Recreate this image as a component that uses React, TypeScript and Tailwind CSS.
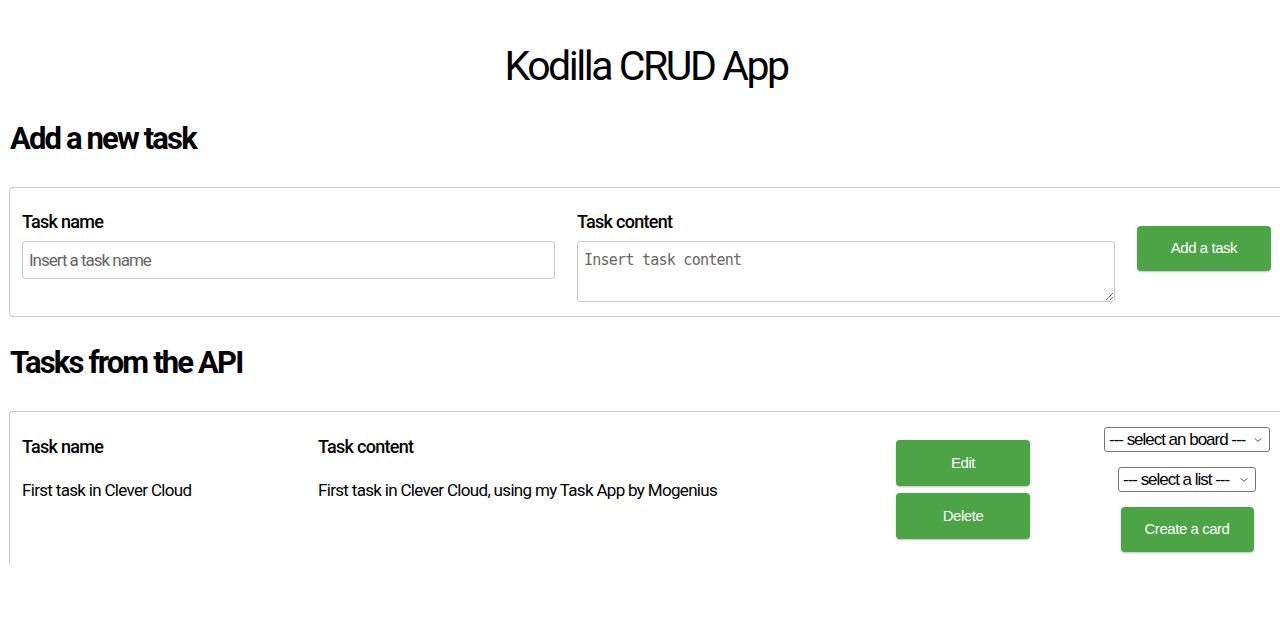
import { ChevronDown } from "lucide-react";

const btn =
  "rounded-[4px] bg-[#4ca446] text-white text-[15px] tracking-[-0.03em] [font-family:'Liberation_Sans',Arial,sans-serif] shadow-[0_1px_2px_rgba(0,0,0,0.25)]";

const SelectBox = ({ label, className }: { label: string; className: string }) => (
  <div
    className={`flex items-center justify-between whitespace-nowrap rounded-[3px] border border-[#767676] bg-white pl-[4px] pr-[5px] text-[17px] leading-none tracking-[-0.06em] text-black [font-family:'Liberation_Sans',Arial,sans-serif] ${className}`}
  >
    <span>{label}</span>
    <ChevronDown className="h-[12px] w-[12px] shrink-0" strokeWidth={1.5} />
  </div>
);

export default function App() {
  return (
    <div className="w-full overflow-hidden bg-white text-black [font-family:Roboto,sans-serif]">
      <h1 className="pt-[42px] pl-[12px] text-center text-[41px] leading-[48px] tracking-[-0.06em]">
        Kodilla CRUD App
      </h1>

      <h2 className="mt-[29px] pl-[10px] text-[31px] font-bold leading-[40px] tracking-[-0.06em]">
        Add a new task
      </h2>

      <div className="mt-[28px] ml-[9px] flex h-[130px] w-[1300px] items-start rounded-l-[4px] border border-[#c8c8c8] pt-[22px] pl-[12px]">
        <div className="flex w-[533px] flex-col">
          <label className="text-[18px] font-medium leading-[24px] tracking-[-0.04em]">Task name</label>
          <input
            className="mt-[7px] h-[38px] rounded-[3px] border border-[#c8c8c8] px-[6px] text-[17px] tracking-[-0.06em] text-[#555] placeholder:text-[#666] outline-none"
            placeholder="Insert a task name"
          />
        </div>
        <div className="ml-[22px] flex w-[538px] flex-col">
          <label className="text-[18px] font-medium leading-[24px] tracking-[-0.04em]">Task content</label>
          <textarea
            className="mt-[7px] h-[61px] rounded-[3px] border border-[#c8c8c8] px-[6px] py-[9px] text-[15px] leading-[18px] [font-family:'DejaVu_Sans_Mono',monospace] tracking-[-0.05em] placeholder:text-[#666] outline-none"
            placeholder="Insert task content"
          />
        </div>
        <button className={`${btn} ml-[22px] mt-[16px] h-[45px] w-[134px]`}>Add a task</button>
      </div>

      <h2 className="mt-[26px] pl-[10px] text-[31px] font-bold leading-[40px] tracking-[-0.06em]">
        Tasks from the API
      </h2>

      <div className="mt-[28px] ml-[9px] flex h-[153px] w-[1300px] items-start rounded-tl-[4px] border-t border-l border-[#c8c8c8] pl-[12px]">
        <div className="flex w-[296px] flex-col pt-[23px]">
          <span className="text-[18px] font-medium leading-[24px] tracking-[-0.04em]">Task name</span>
          <span className="mt-[19px] text-[17px] leading-[24px] tracking-[-0.04em]">First task in Clever Cloud</span>
        </div>
        <div className="flex w-[578px] flex-col pt-[23px]">
          <span className="text-[18px] font-medium leading-[24px] tracking-[-0.04em]">Task content</span>
          <span className="mt-[19px] text-[17px] leading-[24px] tracking-[-0.04em]">
            First task in Clever Cloud, using my Task App by Mogenius
          </span>
        </div>
        <div className="flex flex-col gap-[7px] pt-[28px]">
          <button className={`${btn} h-[46px] w-[134px]`}>Edit</button>
          <button className={`${btn} h-[46px] w-[134px]`}>Delete</button>
        </div>
        <div className="ml-[74px] flex w-[166px] flex-col items-center pt-[15px]">
          <SelectBox label="--- select an board ---" className="h-[25px] w-[166px]" />
          <SelectBox label="--- select a list ---" className="mt-[15px] h-[25px] w-[138px]" />
          <button className={`${btn} mt-[15px] h-[45px] w-[133px]`}>Create a card</button>
        </div>
      </div>
    </div>
  );
}
